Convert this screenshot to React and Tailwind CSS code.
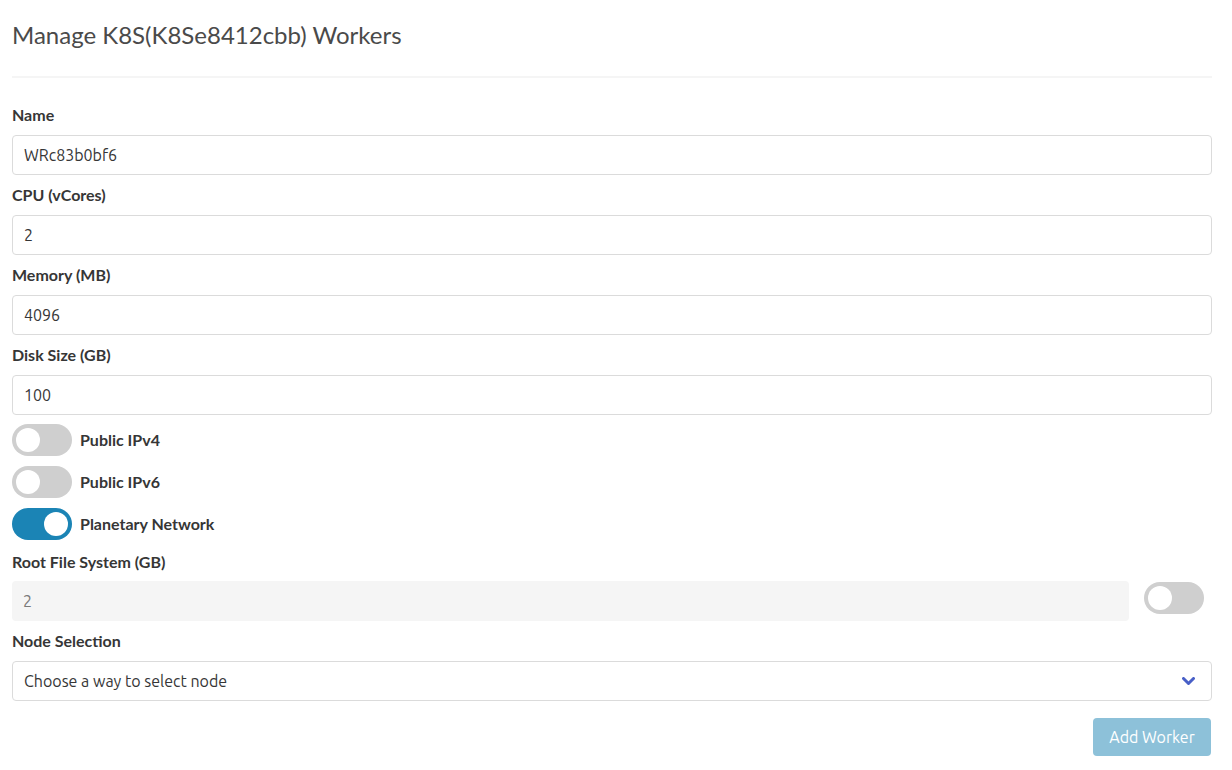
import React, { useState } from "react";

function Toggle({ on, onChange }) {
  return (
    <button
      type="button"
      onClick={onChange}
      className={
        "relative h-8 w-[60px] shrink-0 rounded-full " +
        (on ? "bg-[#1b84b5]" : "bg-[#cfcfcf]")
      }
    >
      <span
        className={
          "absolute top-1 h-6 w-6 rounded-full bg-white " +
          (on ? "left-[32px]" : "left-1")
        }
      />
    </button>
  );
}

function Field({ label, value, onChange }) {
  return (
    <div className="flex flex-col">
      <label className="h-6 mb-2 flex items-center text-base font-bold text-[#363636]">
        {label}
      </label>
      <input
        value={value}
        onChange={(e) => onChange(e.target.value)}
        className="h-10 w-full rounded border border-[#dbdbdb] px-[11px] text-base text-[#363636] outline-none"
        style={{ fontFamily: "Ubuntu, 'Noto Sans', sans-serif" }}
      />
    </div>
  );
}

export default function App() {
  const [name, setName] = useState("WRc83b0bf6");
  const [cpu, setCpu] = useState("2");
  const [memory, setMemory] = useState("4096");
  const [disk, setDisk] = useState("100");
  const [ipv4, setIpv4] = useState(false);
  const [ipv6, setIpv6] = useState(false);
  const [planetary, setPlanetary] = useState(true);
  const [rootfs, setRootfs] = useState(false);

  return (
    <div className="min-h-screen bg-white pl-3 pr-5 font-['Lato',sans-serif]">
      {/* ================= HEADER ================= */}
      <h1 className="pt-[20px] pb-[26px] text-[24px] leading-[30px] text-[#4a4a4a]">
        Manage K8S(K8Se8412cbb) Workers
      </h1>
      <hr className="border-0 h-[2px] bg-[#f5f5f5]" />

      {/* ================= FORM ================= */}
      <div className="pt-[25px] flex flex-col gap-2">
        <Field label="Name" value={name} onChange={setName} />
        <Field label="CPU (vCores)" value={cpu} onChange={setCpu} />
        <Field label="Memory (MB)" value={memory} onChange={setMemory} />
        <Field label="Disk Size (GB)" value={disk} onChange={setDisk} />
      </div>

      <div className="mt-[9px] flex flex-col gap-[10px]">
        <div className="flex items-center gap-2">
          <Toggle on={ipv4} onChange={() => setIpv4(!ipv4)} />
          <span className="text-base font-bold text-[#363636]">Public IPv4</span>
        </div>
        <div className="flex items-center gap-2">
          <Toggle on={ipv6} onChange={() => setIpv6(!ipv6)} />
          <span className="text-base font-bold text-[#363636]">Public IPv6</span>
        </div>
        <div className="flex items-center gap-2">
          <Toggle on={planetary} onChange={() => setPlanetary(!planetary)} />
          <span className="text-base font-bold text-[#363636]">Planetary Network</span>
        </div>
      </div>

      <label className="mt-[10px] h-6 flex items-center text-base font-bold text-[#363636]">
        Root File System (GB)
      </label>
      <div className="mt-[7px] flex items-center gap-[15px]">
        <input
          value="2"
          disabled
          readOnly
          className="h-10 flex-1 rounded bg-[#f5f5f5] px-[11px] text-base text-[#7a7a7a] outline-none"
          style={{ fontFamily: "Ubuntu, 'Noto Sans', sans-serif" }}
        />
        <div className="pr-2">
          <Toggle on={rootfs} onChange={() => setRootfs(!rootfs)} />
        </div>
      </div>

      <div className="mt-2 flex flex-col">
        <label className="h-6 mb-2 flex items-center text-base font-bold text-[#363636]">
          Node Selection
        </label>
        <div className="relative h-10 w-full rounded border border-[#dbdbdb]">
          <div
            className="flex h-full items-center px-[11px] text-base text-[#363636]"
            style={{ fontFamily: "Ubuntu, 'Noto Sans', sans-serif" }}
          >
            Choose a way to select node
          </div>
          <svg
            className="absolute right-[16px] top-[15px]"
            width="13"
            height="9"
            viewBox="0 0 13 9"
            fill="none"
          >
            <path
              d="M1.5 1.5 L6.5 6.5 L11.5 1.5"
              stroke="#485fc7"
              strokeWidth="3"
              strokeLinecap="round"
              strokeLinejoin="round"
            />
          </svg>
        </div>
      </div>

      <div className="mt-[17px] flex justify-end pr-[1px]">
        <button
          disabled
          className="h-[38px] w-[118px] rounded bg-[#8dc1d9] text-base text-white"
          style={{ fontFamily: "Ubuntu, 'Noto Sans', sans-serif" }}
        >
          Add Worker
        </button>
      </div>
    </div>
  );
}
